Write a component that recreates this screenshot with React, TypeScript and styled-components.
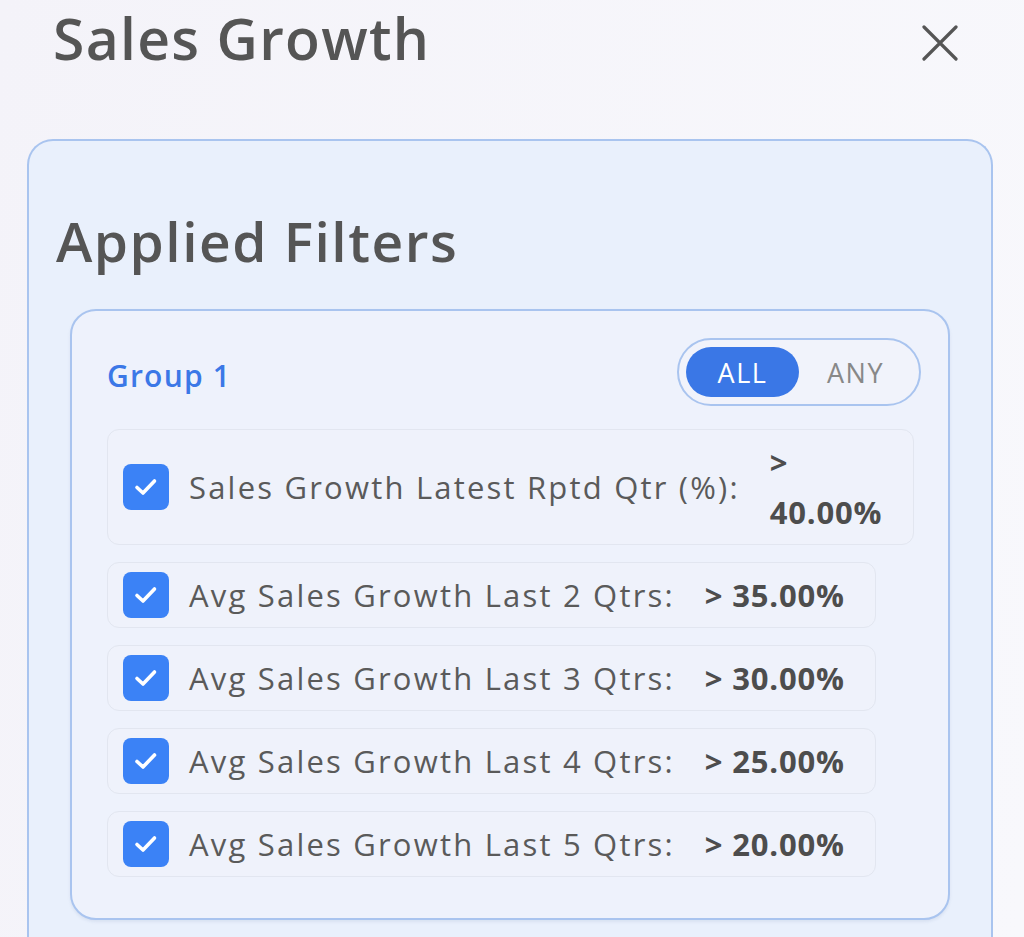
import React from "react";
import styled, { createGlobalStyle } from "styled-components";

interface Filter {
  label: string;
  value: string;
}

const filters: Filter[] = [
  { label: "Sales Growth Latest Rptd Qtr (%):", value: "> 40.00%" },
  { label: "Avg Sales Growth Last 2 Qtrs:", value: "> 35.00%" },
  { label: "Avg Sales Growth Last 3 Qtrs:", value: "> 30.00%" },
  { label: "Avg Sales Growth Last 4 Qtrs:", value: "> 25.00%" },
  { label: "Avg Sales Growth Last 5 Qtrs:", value: "> 20.00%" },
];

function CloseIcon() {
  return (
    <svg width="36" height="36" viewBox="0 0 36 36" fill="none">
      <path d="M2 2 L34 34 M34 2 L2 34" stroke="#555" strokeWidth="3.2" strokeLinecap="round" />
    </svg>
  );
}

function CheckIcon() {
  return (
    <svg width="28" height="28" viewBox="0 0 28 28" fill="none">
      <path d="M5 14.5 L11 20 L22.5 8" stroke="#fff" strokeWidth="3.6" strokeLinecap="round" strokeLinejoin="round" />
    </svg>
  );
}

function App() {
  return (
    <>
      <GlobalStyle />
      <Page>
        <Header>
          <Title>Sales Growth</Title>
          <CloseButton>
            <CloseIcon />
          </CloseButton>
        </Header>

        <Card>
          <CardTitle>Applied Filters</CardTitle>
          <Group>
            <GroupHead>
              <GroupName>Group 1</GroupName>
              <Toggle>
                <ToggleOption active>ALL</ToggleOption>
                <ToggleOption>ANY</ToggleOption>
              </Toggle>
            </GroupHead>
            <Rows>
              {filters.map((f) => (
                <Row key={f.label}>
                  <Checkbox>
                    <CheckIcon />
                  </Checkbox>
                  <Label>{f.label}</Label>
                  <Value>{f.value}</Value>
                </Row>
              ))}
            </Rows>
          </Group>
        </Card>
      </Page>
    </>
  );
}

export default App;

const GlobalStyle = createGlobalStyle`
  html, body {
    margin: 0;
    padding: 0;
    height: 100%;
    overflow: hidden;
  }
  body {
    font-family: "Open Sans", "Noto Sans", sans-serif;
    background: linear-gradient(100deg, #f4f3f9 0%, #f8f8fc 100%);
  }
`;

const Page = styled.div`
  height: 937px;
  display: flex;
  flex-direction: column;
`;

const Header = styled.div`
  display: flex;
  justify-content: space-between;
  align-items: center;
  height: 76px;
  padding: 0 66px 0 53px;
  margin-bottom: 63px;
`;

const Title = styled.h1`
  margin: 0;
  font-size: 57px;
  font-weight: 600;
  color: #555;
  letter-spacing: 1.3px;
`;

const CloseButton = styled.div`
  display: flex;
  margin-top: 10px;
`;

const Card = styled.div`
  flex: 1;
  margin: 0 31px 0 27px;
  border: 2px solid #a9c4ef;
  border-bottom: none;
  border-radius: 26px 26px 0 0;
  background: #e9f0fc;
`;

const CardTitle = styled.h2`
  margin: 66px 0 34px 27px;
  font-size: 55px;
  line-height: 68px;
  font-weight: 600;
  color: #555;
  letter-spacing: 1.5px;
`;

const Group = styled.div`
  margin: 0 41px;
  border: 2px solid #a9c4ef;
  border-radius: 26px;
  background: #eef2fc;
  padding: 27px 27px 41px 35px;
  box-shadow: 0 2px 3px rgba(120, 140, 180, 0.15);
`;

const GroupHead = styled.div`
  display: flex;
  justify-content: space-between;
  align-items: center;
  margin-bottom: 23px;
`;

const GroupName = styled.div`
  font-size: 30px;
  font-weight: 600;
  color: #3b78e7;
  letter-spacing: 1.2px;
  margin-top: 6px;
`;

const Toggle = styled.div`
  display: flex;
  width: 244px;
  height: 68px;
  box-sizing: border-box;
  padding: 7px;
  border: 2px solid #a9c4ef;
  border-radius: 34px;
  background: #f1f3fb;
`;

const ToggleOption = styled.div<{ active?: boolean }>`
  flex: 1;
  display: flex;
  align-items: center;
  justify-content: center;
  border-radius: 26px;
  font-size: 27px;
  letter-spacing: 1.5px;
  background: ${(p) => (p.active ? "#3a77e6" : "transparent")};
  color: ${(p) => (p.active ? "#fff" : "#888")};
`;

const Rows = styled.div`
  display: flex;
  flex-direction: column;
  align-items: flex-start;
  gap: 17px;
  padding-right: 7px;
`;

const Row = styled.div`
  display: flex;
  align-items: center;
  max-width: 100%;
  box-sizing: border-box;
  padding: 7px 30px 7px 15px;
  border: 1px solid #e2e6f0;
  border-radius: 12px;
  background: #eff2fb;
  font-size: 31px;
  line-height: 50px;
`;

const Checkbox = styled.div`
  flex-shrink: 0;
  width: 46px;
  height: 46px;
  border-radius: 8px;
  background: #3b82f6;
  display: flex;
  align-items: center;
  justify-content: center;
  margin-right: 20px;
`;

const Label = styled.span`
  flex-shrink: 0;
  white-space: nowrap;
  color: #5a5a5a;
  letter-spacing: 2.2px;
  margin-right: 30px;
`;

const Value = styled.span`
  font-weight: 700;
  color: #4d4d4d;
  letter-spacing: 0.8px;
`;
